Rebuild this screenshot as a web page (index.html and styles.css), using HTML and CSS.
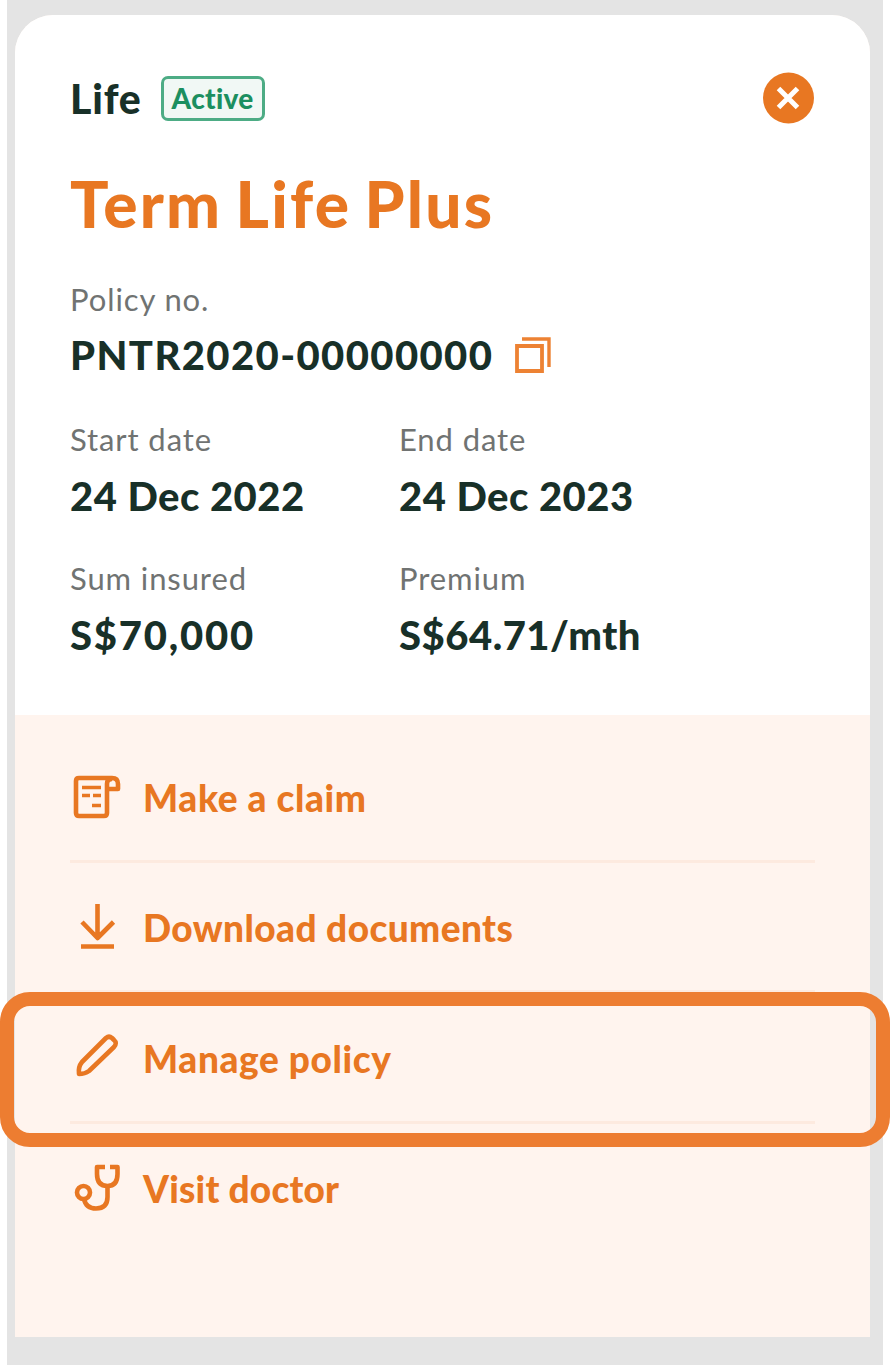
FILE: index.html
```html
<!DOCTYPE html>
<html lang="en">

<head>
    <meta charset="UTF-8">
    <meta name="viewport" content="width=device-width, initial-scale=1.0">
    <title>Term Life Plus</title>
    <link rel="stylesheet" href="styles.css">
</head>

<body>
    <main class="screen">
        <article class="card">
            <section class="details">
                <header class="card-header">
                    <span class="category">Life</span>
                    <span class="badge">Active</span>
                    <button class="close" aria-label="Close">
                        <svg width="52" height="52" viewBox="0 0 52 52">
                            <circle cx="25.5" cy="26" r="25.5" fill="#e87722" />
                            <path d="M15.5 16.500L34.5 35.500M34.5 16.500L15.5 35.500" stroke="#fff" stroke-width="5" />
                        </svg>
                    </button>
                </header>
                <h1 class="title">Term Life Plus</h1>
                <dl class="facts">
                    <div class="fact fact-wide">
                        <dt class="label">Policy no.</dt>
                        <dd class="value value-policy">
                            <span>PNTR2020-00000000</span>
                            <svg class="copy" width="36" height="37" viewBox="0 0 36 37" fill="none" stroke="#ed8233">
                                <path d="M2 9H27V34H2Z" stroke-width="3.8" />
                                <path d="M7 2H34V30" stroke-width="3.4" />
                            </svg>
                        </dd>
                    </div>
                    <div class="fact">
                        <dt class="label">Start date</dt>
                        <dd class="value">24 Dec 2022</dd>
                    </div>
                    <div class="fact">
                        <dt class="label">End date</dt>
                        <dd class="value">24 Dec 2023</dd>
                    </div>
                    <div class="fact">
                        <dt class="label">Sum insured</dt>
                        <dd class="value value-sum">S$70,000</dd>
                    </div>
                    <div class="fact">
                        <dt class="label">Premium</dt>
                        <dd class="value">S$64.71/mth</dd>
                    </div>
                </dl>
            </section>

            <nav class="menu">
                <a class="menu-item">
                    <svg class="icon" viewBox="0 0 56 56">
                        <path d="M9 9H42Q48 9 48 15V20H37V44Q37 47 34 47H9Q6 47 6 44V12Q6 9 9 9M37 20V15Q37 10 42 10" />
                        <path class="thin" d="M12 18.5H31M12 26.5H20M23 26.5H31M22 36.5H31" />
                    </svg>
                    <span>Make a claim</span>
                </a>
                <a class="menu-item">
                    <svg class="icon" viewBox="0 0 56 56">
                        <path d="M27.5 4V38M12 22L27.5 38L43.5 22M11 46.500H44" />
                    </svg>
                    <span class="text-download">Download documents</span>
                </a>
                <a class="menu-item">
                    <svg class="icon" viewBox="0 0 56 56">
                        <path d="M36 8Q39 5.500 42 8L44 10Q47.500 13 44 17L19 41Q15 44 9 44Q8 37 12 32Z" />
                    </svg>
                    <span>Manage policy</span>
                </a>
                <a class="menu-item">
                    <svg class="icon" viewBox="0 0 56 56">
                        <path d="M35 6H27V13Q27 25 37.5 25Q47.5 25 47.5 13V6H40" />
                        <path d="M37.5 25V36Q37.5 47.500 26 47.500Q16 47.500 14 38" />
                        <circle cx="13.5" cy="31.5" r="6.5" />
                    </svg>
                    <span class="text-doctor">Visit doctor</span>
                </a>
            </nav>
        </article>
    </main>
    <div class="highlight"></div>
</body>

</html>
```
FILE: styles.css
```css
* {
    box-sizing: border-box;
    margin: 0;
    padding: 0;
}

body {
    position: relative;
    width: 890px;
    height: 1365px;
    padding: 0 7px;
    background-color: #fff;
    font-family: Lato, sans-serif;
    overflow: hidden;
}

.screen {
    height: 1365px;
    padding: 15px 13px 28px 8px;
    background-color: #e4e4e4;
}

.card {
    height: 1322px;
    border-radius: 38px 38px 0 0;
    background-color: #fff4ee;
    overflow: hidden;
}

.details {
    height: 700px;
    padding: 58px 55px 0;
    background-color: #fff;
    color: #183028;
}

.card-header {
    display: flex;
    align-items: center;
    height: 50px;
}

.category {
    font-size: 41px;
    font-weight: 900;
    letter-spacing: 0.8px;
}

.badge {
    width: 104px;
    height: 45px;
    margin-left: 19px;
    border: 3px solid #4dac85;
    border-radius: 7px;
    background-color: #f1f8f5;
    color: #1b8f60;
    font-size: 28px;
    font-weight: 900;
    letter-spacing: 0.3px;
    line-height: 38px;
    text-align: center;
}

.close {
    width: 52px;
    height: 52px;
    margin-left: auto;
    border: none;
    background: none;
}

.close svg {
    display: block;
}

.title {
    margin-top: 46px;
    color: #e87722;
    font-size: 64px;
    font-weight: 900;
    letter-spacing: 2.2px;
    line-height: 70px;
    white-space: nowrap;
    word-spacing: -4px;
}

.facts {
    display: grid;
    grid-template-columns: 329px 1fr;
    row-gap: 39.5px;
    margin-top: 40px;
}

.fact-wide {
    grid-column: 1 / 3;
}

.label {
    color: #707372;
    font-size: 31px;
    letter-spacing: 0.9px;
    line-height: 40px;
}

.value {
    margin-top: 12px;
    font-size: 40px;
    font-weight: 900;
    letter-spacing: 0.5px;
    line-height: 50px;
    height: 48px;
    white-space: nowrap;
}

.value-policy {
    display: flex;
    align-items: center;
    gap: 22px;
    letter-spacing: 1.4px;
}

.value-sum {
    letter-spacing: 1.8px;
}

.menu {
    padding: 17px 55px 0;
}

.menu-item {
    display: flex;
    align-items: center;
    gap: 17px;
    height: 130.5px;
    padding-top: 3px;
    border-bottom: 3px solid #fdeadf;
    color: #e87722;
    font-size: 37px;
    font-weight: 900;
    letter-spacing: 0.6px;
}

.menu-item:last-child {
    border-bottom-color: transparent;
}

.text-download {
    letter-spacing: 0.4px;
}

.text-doctor {
    letter-spacing: 0.2px;
}

.icon {
    width: 56px;
    height: 56px;
    fill: none;
    stroke: #e87722;
    stroke-width: 4.6;
    stroke-linejoin: round;
}

.icon .thin {
    stroke-width: 3.5;
}

/* frame around the "Manage policy" row */
.highlight {
    position: absolute;
    top: 992px;
    left: 0;
    width: 890px;
    height: 155px;
    border: 14px solid #ed7d31;
    border-radius: 30px;
}
```
